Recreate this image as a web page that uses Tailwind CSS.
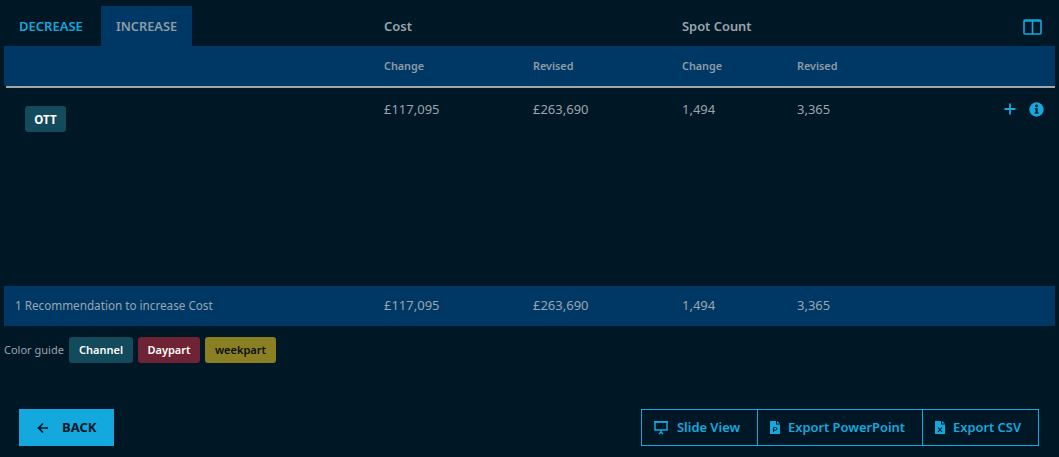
<!DOCTYPE html>
<html><head><meta charset="utf-8"><script src="https://cdn.jsdelivr.net/npm/@tailwindcss/browser@4"></script></head>
<body class="bg-[#001726] w-[1059px] h-[457px] overflow-hidden font-['Noto_Sans','Open_Sans',sans-serif] text-[#9aa5ad]">
<div class="h-[457px] px-[4px] pt-[6px] flex flex-col">
  <div class="grid grid-cols-[380px_298px_1fr_auto] h-[40px] items-center">
    <div class="flex h-[40px] text-[13px] font-semibold leading-[41px]">
      <div class="pl-[15px] w-[97px] text-[#14a9de]">DECREASE</div>
      <div class="bg-[#003865] w-[91px] text-center text-[12.8px] text-[#8f9ca6]">INCREASE</div>
    </div>
    <div class="text-[13px] font-semibold leading-[41px] h-[40px]">Cost</div>
    <div class="text-[12.9px] font-semibold leading-[41px] h-[40px]">Spot Count</div>
    <svg class="mr-[13px] w-[19px] h-[16px] translate-y-[1px]" viewBox="0 0 19 16" fill="none" stroke="#14a9de" stroke-width="1.6"><rect x="1" y="1" width="17" height="14" rx="1"/><path d="M9.5 1v14M1 2h17" /></svg>
  </div>
  <div class="grid grid-cols-[380px_149px_149px_115px_1fr] bg-[#003865] h-[40px] items-center text-[10.8px] font-semibold text-[#8f9ca6]">
    <div></div><div>Change</div><div>Revised</div><div>Change</div><div>Revised</div>
  </div>
  <div class="h-[2px] ml-[2px] bg-[#a3a6a8]"></div>
  <div class="grid grid-cols-[380px_149px_149px_115px_1fr] h-[198px] text-[13px] leading-[18px] pt-[12px]">
    <div class="pl-[21px]"><span class="inline-block mt-[6px] bg-[#134a5c] text-white text-[11.5px] font-bold leading-[27px] h-[26px] w-[41px] text-center rounded-[3px]">OTT</span></div>
    <div>£117,095</div><div>£263,690</div><div>1,494</div>
    <div class="flex justify-between pr-[11px]"><span>3,365</span>
      <span class="flex items-center gap-[13px] h-[18px]">
        <svg class="w-[12px] h-[12px]" viewBox="0 0 12 12" stroke="#14a9de" stroke-width="1.8"><path d="M6 .5v11M.5 6h11"/></svg>
        <svg class="w-[15px] h-[15px]" viewBox="0 0 15 15"><circle cx="7.5" cy="7.5" r="7.2" fill="#14a9de"/><circle cx="7.5" cy="4" r="1.4" fill="#001625"/><path d="M5.800 6.200h2.900v4.200h1v1.300H5.600v-1.300h1v-2.900h-.8z" fill="#001625"/></svg>
      </span>
    </div>
  </div>
  <div class="grid grid-cols-[380px_149px_149px_115px_1fr] bg-[#003865] h-[40px] items-center text-[13px]">
    <div class="pl-[11px] text-[11.7px]">1 Recommendation to increase Cost</div>
    <div>£117,095</div><div>£263,690</div><div>1,494</div><div>3,365</div>
  </div>
  <div class="flex items-center mt-[11px] h-[26px] text-[11px] font-semibold gap-[5px]">
    <span class="font-normal text-[11px] w-[60px]">Color guide</span>
    <span class="bg-[#134a5c] text-white leading-[26px] w-[64px] text-center rounded-[3px]">Channel</span>
    <span class="bg-[#6e2434] text-white leading-[26px] w-[62px] text-center rounded-[3px]">Daypart</span>
    <span class="bg-[#8a7f22] text-[#0a0f10] leading-[26px] w-[71px] text-center rounded-[3px]">weekpart</span>
  </div>
  <div class="flex justify-between mt-[46px] pl-[15px] pr-[16px]">
    <div class="w-[95px] h-[37px] bg-[#14a9de] flex items-center pl-[18px] gap-[13px] text-[#001625] text-[13px] font-bold">
      <svg class="w-[12px] h-[12px]" viewBox="0 0 12 12" fill="none" stroke="#001625" stroke-width="1.6"><path d="M11 6H1.500M6 1.500 1.500 6 6 10.500"/></svg>
      <span>BACK</span>
    </div>
    <div class="flex h-[37px] border border-[#14a9de] text-[#14a9de] text-[12.9px] font-semibold">
      <div class="w-[116px] flex items-center pl-[12px] gap-[9px] border-r border-[#14a9de]">
        <svg class="w-[14px] h-[14px]" viewBox="0 0 14 14" fill="none" stroke="#14a9de" stroke-width="1.5"><rect x="1" y="1" width="12" height="8"/><path d="M0 .8h14M7 9v2M5 13l2-2 2 2"/></svg>
        <span>Slide View</span>
      </div>
      <div class="w-[165px] flex items-center pl-[12px] gap-[8px] border-r border-[#14a9de]">
        <svg class="w-[10px] h-[13px]" viewBox="0 0 10 13"><path d="M0 0h6v3.500h4V13H0zM7 0l3 2.500H7z" fill="#14a9de"/><path d="M3.500 11V6.500h2a1.300 1.300 0 0 1 0 2.700h-2" fill="none" stroke="#001625" stroke-width="1"/></svg>
        <span>Export PowerPoint</span>
      </div>
      <div class="w-[115px] flex items-center pl-[12px] gap-[8px]">
        <svg class="w-[10px] h-[13px]" viewBox="0 0 10 13"><path d="M0 0h6v3.500h4V13H0zM7 0l3 2.500H7z" fill="#14a9de"/><path d="M3 6.500l4 4.500M7 6.500l-4 4.500" fill="none" stroke="#001625" stroke-width="1.100"/></svg>
        <span>Export CSV</span>
      </div>
    </div>
  </div>
</div>
</body></html>
